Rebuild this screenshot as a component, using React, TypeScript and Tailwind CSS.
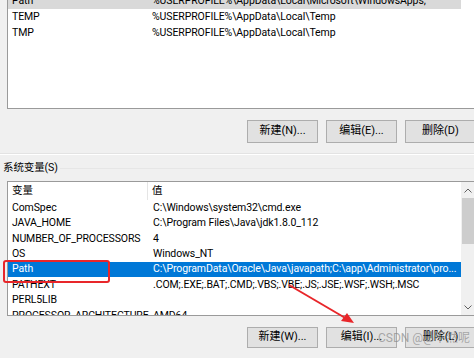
import React from 'react';

const font = { fontFamily: 'Roboto, "Noto Sans CJK SC", sans-serif' };

const userRows = [
    ['Path', '%USERPROFILE%\\AppData\\Local\\Microsoft\\WindowsApps;'],
    ['TEMP', '%USERPROFILE%\\AppData\\Local\\Temp'],
    ['TMP', '%USERPROFILE%\\AppData\\Local\\Temp'],
];

const sysRows = [
    ['ComSpec', 'C:\\Windows\\system32\\cmd.exe'],
    ['JAVA_HOME', 'C:\\Program Files\\Java\\jdk1.8.0_112'],
    ['NUMBER_OF_PROCESSORS', '4'],
    ['OS', 'Windows_NT'],
    ['Path', 'C:\\ProgramData\\Oracle\\Java\\javapath;C:\\app\\Administrator\\pro...'],
    ['PATHEXT', '.COM;.EXE;.BAT;.CMD;.VBS;.VBE;.JS;.JSE;.WSF;.WSH;.MSC'],
    ['PERL5LIB', ''],
    ['PROCESSOR_ARCHITECTURE', 'AMD64'],
];

function Btn({ label }: { label: string }) {
    return (
        <div className="w-[71px] shrink-0 h-full flex items-center justify-center bg-[#e1e1e1] border border-[#adadad] text-[11px] tracking-normal text-black">
            {label}
        </div>
    );
}

export default function App() {
    return (
        <div className="relative w-[474px] h-[358px] overflow-hidden bg-[#f0f0f0] text-black text-[10.5px] tracking-[-0.1px]" style={font}>
            {/* 用户变量 list (scrolled, top cut off) */}
            <div className="ml-[7px] -mt-[8px] w-[475px] h-[117px] bg-white border border-[#9a9a9a] overflow-hidden">
                <div className="w-[453px]">
                    {userRows.map(([k, v], i) => (
                        <div key={i} className={`flex items-center h-[16px] ${i === 0 ? 'bg-[#d9d9d9]' : ''}`}>
                            <div className="w-[140px] shrink-0 pl-[4px] whitespace-nowrap">{k}</div>
                            <div className="pl-[4px] whitespace-nowrap">{v}</div>
                        </div>
                    ))}
                </div>
            </div>

            {/* user buttons */}
            <div className="flex gap-[8px] pl-[247px] mt-[11px] h-[23px]">
                <Btn label="新建(N)..." />
                <Btn label="编辑(E)..." />
                <Btn label="删除(D)" />
            </div>

            {/* divider */}
            <div className="mt-[10px] border-t border-[#e3e3e3] border-b border-b-white" />

            {/* 系统变量 label */}
            <div className="flex items-center h-[26px] pl-[3px]">
                <span className="whitespace-nowrap">系统变量(S)</span>
                <div className="flex-1 ml-[2px] border-t border-[#e6e6e6]" />
            </div>

            {/* system list */}
            <div className="ml-[7px] w-[475px] h-[135px] bg-white border border-[#9a9a9a] flex overflow-hidden">
                <div className="w-[453px] shrink-0 overflow-hidden">
                    <div className="flex items-center h-[18px]">
                        <div className="w-[140px] shrink-0 h-full flex items-center pl-[4px] border-r border-[#e5e5e5]">变量</div>
                        <div className="pl-[4px]">值</div>
                    </div>
                    {sysRows.map(([k, v], i) => (
                        <div key={i} className={`flex items-center h-[15.4px] ${i === 4 ? 'bg-[#0078d7] text-white' : ''}`}>
                            <div className="w-[140px] shrink-0 pl-[4px] whitespace-nowrap">{k}</div>
                            <div className="pl-[5px] whitespace-nowrap">{v}</div>
                        </div>
                    ))}
                </div>
                {/* scrollbar */}
                <div className="w-[17px] shrink-0 h-full bg-[#f0f0f0] flex flex-col items-start">
                    <div className="h-[16px] w-[13px] flex items-center justify-center">
                        <svg width="8" height="5" viewBox="0 0 8 5"><path d="M0.5 4.5 L4 1 L7.5 4.5" fill="none" stroke="#606060" strokeWidth="1" /></svg>
                    </div>
                    <div className="h-[46px] w-[12px] ml-[1px] bg-[#cdcdcd]" />
                    <div className="flex-1" />
                    <div className="h-[16px] w-[13px] flex items-center justify-center">
                        <svg width="8" height="5" viewBox="0 0 8 5"><path d="M0.5 0.5 L4 4 L7.5 0.5" fill="none" stroke="#606060" strokeWidth="1" /></svg>
                    </div>
                </div>
            </div>

            {/* system buttons */}
            <div className="flex gap-[8px] pl-[247px] mt-[11px] h-[21px]">
                <Btn label="新建(W)..." />
                <Btn label="编辑(I)..." />
                <Btn label="删除(L)" />
            </div>

            {/* annotations */}
            <div className="absolute left-[3px] top-[260px] w-[107px] h-[23px] border-2 border-[#e8262a] rounded-[3px]" />
            <svg className="absolute left-0 top-0" width="474" height="358" viewBox="0 0 474 358">
                <line x1="289" y1="285" x2="347" y2="319" stroke="#e8262a" strokeWidth="2" />
                <path d="M354 323 L341 321 L347 313 Z" fill="#e8262a" />
            </svg>
            <div className="absolute left-[378px] top-[329px] text-[12px] tracking-normal text-[#8a8a8a]/70 whitespace-nowrap">CSDN @@不然呢</div>
        </div>
    );
}
